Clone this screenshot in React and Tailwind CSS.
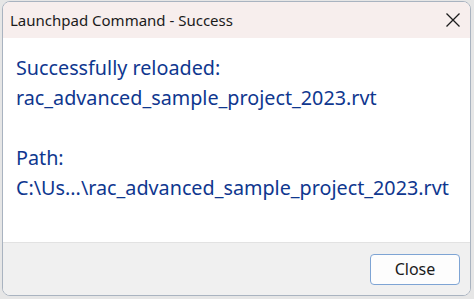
import React from "react";

function CloseGlyph() {
  return (
    <svg width="16" height="16" viewBox="0 0 16 16" className="text-[#1c1c1c]">
      <path d="M1.5 1.5 L14.5 14.5 M14.5 1.5 L1.5 14.5" stroke="currentColor" strokeWidth="1.3" fill="none" />
    </svg>
  );
}

export default function App() {
  return (
    <div
      className="w-[474px] h-[299px] bg-[#e6e6e6] pt-[1px] pl-[2px] pr-[3px] pb-[3px]"
      style={{ fontFamily: '"Noto Sans", "Open Sans", sans-serif' }}
    >
      <div className="h-full flex flex-col rounded-[8px] overflow-hidden border border-[#a9b3c0] bg-white">
        <div className="h-[36px] shrink-0 bg-[#f7eeed] flex items-center justify-between pl-[7px] pr-[9px]">
          <span className="text-[15px] text-[#1b1b1b] leading-none">Launchpad Command - Success</span>
          <CloseGlyph />
        </div>

        <div className="flex-1 bg-white pl-[13px] pt-[15px] text-[19.75px] leading-[30px] text-[#0f378f]">
          <div>Successfully reloaded:</div>
          <div>rac_advanced_sample_project_2023.rvt</div>
          <div>&nbsp;</div>
          <div>Path:</div>
          <div>C:\Us...\rac_advanced_sample_project_2023.rvt</div>
        </div>

        <div className="h-[53px] shrink-0 bg-[#f0f0f0] border-t border-[#e2e2e2] flex items-center justify-end pr-[10px]">
          <button className="w-[90px] h-[31px] rounded-[4px] bg-[#fdfdfd] border border-[#7ea4d4] text-[16px] text-[#1b1b1b]">
            Close
          </button>
        </div>
      </div>
    </div>
  );
}
